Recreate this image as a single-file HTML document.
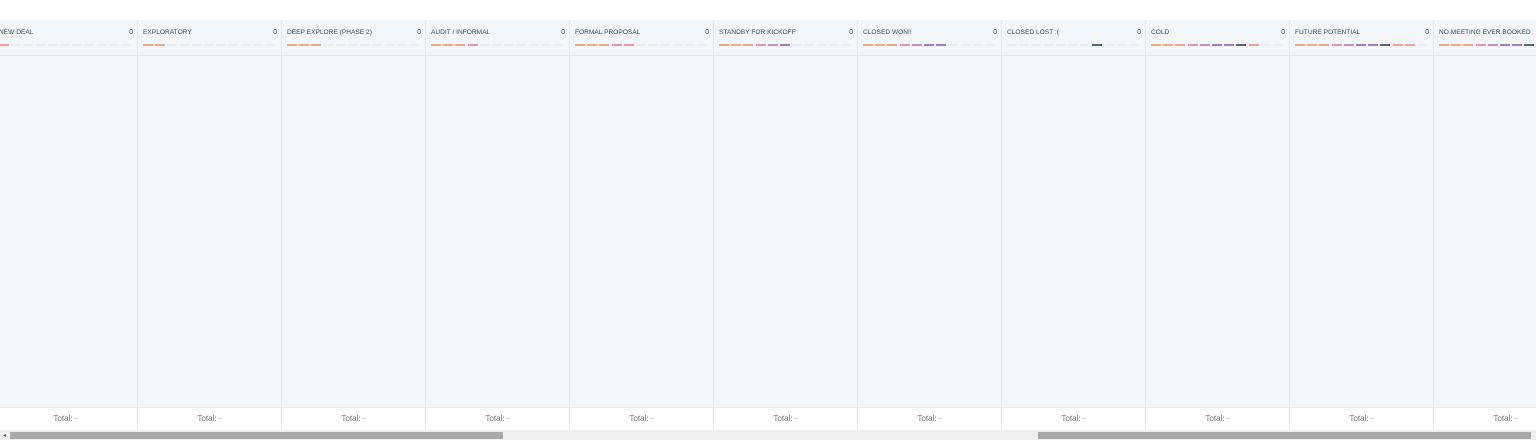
<!DOCTYPE html><html><head><style>
*{margin:0;padding:0;box-sizing:border-box}
body{width:1536px;height:440px;background:#fff;position:relative;overflow:hidden;font-family:"Liberation Sans",sans-serif}
.col{position:absolute;top:20px;width:144px;height:410px;border-left:1px solid #e3e8ee;background:#f4f7fa}
.hd{height:36px;border-bottom:1px solid #e3e8ee;position:relative}
.t{position:absolute;left:5px;top:9px;font-size:6.6px;color:#3d4a5c;white-space:nowrap}
.n{position:absolute;right:4px;top:9px;font-size:7px;color:#3d4a5c}
.b{position:absolute;left:5px;top:24px;display:flex;gap:2.2px}
.b i{display:block;width:10px;height:2px;background:#e8edf2}
.b i.p{background:#f2a48c}.b i.k{background:#eb94a6}.b i.m{background:#c98fc0}.b i.u{background:#a07cc5}.b i.d{background:#55657f}
.ft{position:absolute;left:0;right:0;top:387px;height:23px;background:#fff;border-top:1px solid #e8ecf0;font-size:8px;color:#777;text-align:center;line-height:22px}
.sb{position:absolute;left:0;top:430px;width:1536px;height:10px;background:#f0f0f0}
.th{position:absolute;top:432px;height:7px;background:#a8a8a8}
</style></head><body>
<div class="col" style="left:-7px"><div class="hd"><span class="t">NEW DEAL</span><span class="n">0</span><div class="b"><i class="p"></i><i></i><i></i><i></i><i></i><i></i><i></i><i></i><i></i><i></i><i></i></div></div><div class="ft">Total: -</div></div>
<div class="col" style="left:137px"><div class="hd"><span class="t">EXPLORATORY</span><span class="n">0</span><div class="b"><i class="p"></i><i class="p"></i><i></i><i></i><i></i><i></i><i></i><i></i><i></i><i></i><i></i></div></div><div class="ft">Total: -</div></div>
<div class="col" style="left:281px"><div class="hd"><span class="t">DEEP EXPLORE (PHASE 2)</span><span class="n">0</span><div class="b"><i class="p"></i><i class="p"></i><i class="p"></i><i></i><i></i><i></i><i></i><i></i><i></i><i></i><i></i></div></div><div class="ft">Total: -</div></div>
<div class="col" style="left:425px"><div class="hd"><span class="t">AUDIT / INFORMAL</span><span class="n">0</span><div class="b"><i class="p"></i><i class="p"></i><i class="p"></i><i class="k"></i><i></i><i></i><i></i><i></i><i></i><i></i><i></i></div></div><div class="ft">Total: -</div></div>
<div class="col" style="left:569px"><div class="hd"><span class="t">FORMAL PROPOSAL</span><span class="n">0</span><div class="b"><i class="p"></i><i class="p"></i><i class="p"></i><i class="k"></i><i class="k"></i><i></i><i></i><i></i><i></i><i></i><i></i></div></div><div class="ft">Total: -</div></div>
<div class="col" style="left:713px"><div class="hd"><span class="t">STANDBY FOR KICKOFF</span><span class="n">0</span><div class="b"><i class="p"></i><i class="p"></i><i class="p"></i><i class="k"></i><i class="m"></i><i class="u"></i><i></i><i></i><i></i><i></i><i></i></div></div><div class="ft">Total: -</div></div>
<div class="col" style="left:857px"><div class="hd"><span class="t">CLOSED WON!!</span><span class="n">0</span><div class="b"><i class="p"></i><i class="p"></i><i class="p"></i><i class="k"></i><i class="m"></i><i class="u"></i><i class="u"></i><i></i><i></i><i></i><i></i></div></div><div class="ft">Total: -</div></div>
<div class="col" style="left:1001px"><div class="hd"><span class="t">CLOSED LOST :(</span><span class="n">0</span><div class="b"><i></i><i></i><i></i><i></i><i></i><i></i><i></i><i class="d"></i><i></i><i></i><i></i></div></div><div class="ft">Total: -</div></div>
<div class="col" style="left:1145px"><div class="hd"><span class="t">COLD</span><span class="n">0</span><div class="b"><i class="p"></i><i class="p"></i><i class="p"></i><i class="k"></i><i class="m"></i><i class="u"></i><i class="u"></i><i class="d"></i><i class="p"></i><i></i><i></i></div></div><div class="ft">Total: -</div></div>
<div class="col" style="left:1289px"><div class="hd"><span class="t">FUTURE POTENTIAL</span><span class="n">0</span><div class="b"><i class="p"></i><i class="p"></i><i class="p"></i><i class="k"></i><i class="m"></i><i class="u"></i><i class="u"></i><i class="d"></i><i class="p"></i><i class="p"></i><i></i></div></div><div class="ft">Total: -</div></div>
<div class="col" style="left:1433px"><div class="hd"><span class="t">NO MEETING EVER BOOKED</span><span class="n">0</span><div class="b"><i class="p"></i><i class="p"></i><i class="p"></i><i class="k"></i><i class="m"></i><i class="u"></i><i class="u"></i><i class="d"></i><i class="p"></i><i class="p"></i><i class="p"></i></div></div><div class="ft">Total: -</div></div>
<div class="sb"></div>
<div style="position:absolute;left:3px;top:432px;font-size:6px;color:#666">◂</div>
<div class="th" style="left:10px;width:493px"></div>
<div class="th" style="left:1038px;width:493px"></div>
</body></html>
